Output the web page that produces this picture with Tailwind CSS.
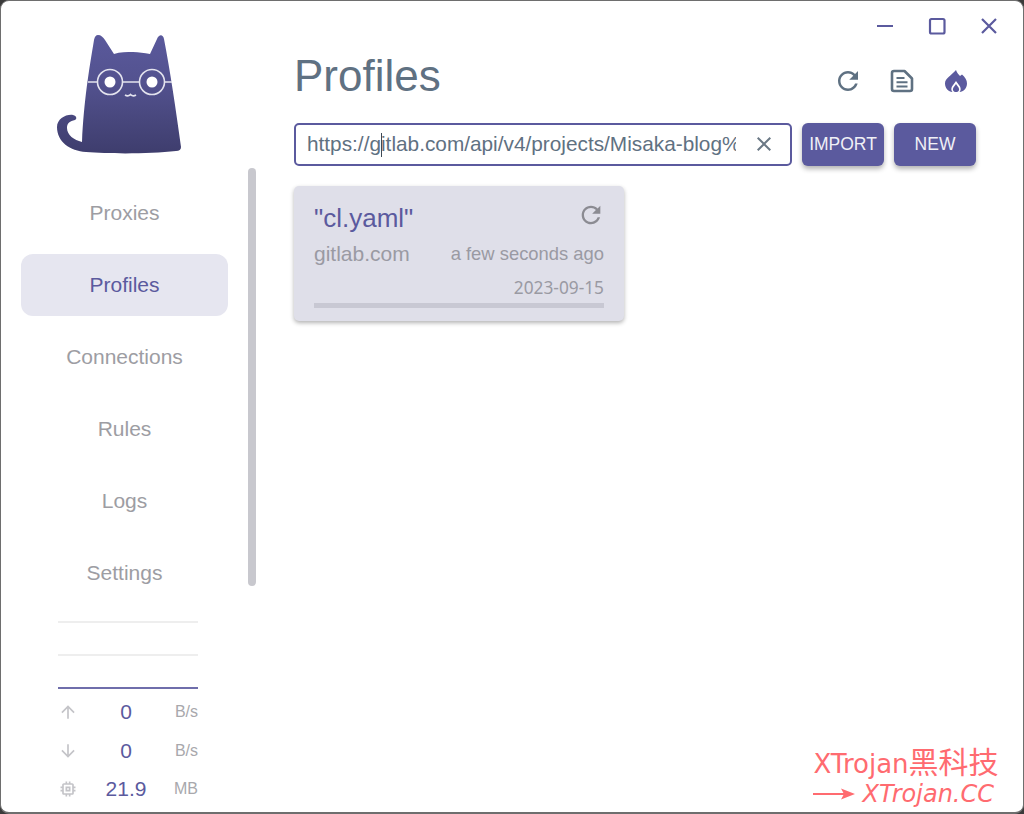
<!DOCTYPE html>
<html lang="en">
<head>
    <meta charset="UTF-8">
    <title>Profiles</title>
    <script src="https://cdn.jsdelivr.net/npm/@tailwindcss/browser@4"></script>
</head>
<body class="bg-[#3a3a3a] font-['Liberation_Sans',Arial,sans-serif]">
    <div class="relative flex w-[1024px] h-[814px] overflow-hidden bg-white rounded-[9px] border border-b-2 border-[#6e6e6e]">

        <!-- sidebar -->
        <aside class="w-[247px] shrink-0 flex flex-col">
            <svg class="shrink-0 ml-[49px] mt-[29px] w-[140px] h-[130px]" viewBox="50 30 140 130">
                <defs>
                    <linearGradient id="catFill" x1="0" y1="0" x2="0" y2="1">
                        <stop offset="0" stop-color="#5a599c"/>
                        <stop offset="0.4" stop-color="#53528f"/>
                        <stop offset="1" stop-color="#3e3d6d"/>
                    </linearGradient>
                </defs>
                <path fill="url(#catFill)" d="M98 35C101 35 103 37 105 40L114 54C120 52 127 52 133 52C139 52 144 53 150 54L157 39C159 34 163 34 164 39C170 70 176 110 181 147Q181 151 176 151C150 154 110 154 86 152C70 151 57 142 57 127C57 119 66 114 73 115C77 116 77 119 75 120C70 121 67 123 67 128C67 135 74 140 82 142C84 100 89 70 94 40Q95 35 98 35Z"/>
                <g fill="none" stroke="#e3e3ee" stroke-width="1.600">
                    <circle cx="110" cy="82" r="12.5"/>
                    <circle cx="152" cy="82" r="12.5"/>
                    <path d="M88 82H97.5M122.500 82H139.500M164.500 82H172"/>
                    <path d="M125 95Q128 97 130.500 94.500Q133 97 136 95" stroke-width="1.600"/>
                </g>
                <circle cx="110" cy="82" r="5.500" fill="#fff"/>
                <circle cx="152" cy="82" r="5.500" fill="#fff"/>
            </svg>

            <nav class="shrink-0 mt-[22px] ml-[20px] w-[207px] flex flex-col gap-[10px] text-[21px] text-center text-[#9d9da3]">
                <a class="h-[62px] flex items-center justify-center">Proxies</a>
                <a class="h-[62px] flex items-center justify-center rounded-[12px] bg-[#e6e6f0] text-[#5b5a9e]">Profiles</a>
                <a class="h-[62px] flex items-center justify-center">Connections</a>
                <a class="h-[62px] flex items-center justify-center">Rules</a>
                <a class="h-[62px] flex items-center justify-center">Logs</a>
                <a class="h-[62px] flex items-center justify-center">Settings</a>
            </nav>

            <!-- traffic graph -->
            <div class="shrink-0 mt-[17px] ml-[57px] w-[140px]">
                <div class="h-[33px] border-t-2 border-[#eeeeee]"></div>
                <div class="h-[33px] border-t-2 border-[#eeeeee]"></div>
                <div class="border-t-2 border-[#6f6eab]"></div>
            </div>

            <!-- stats -->
            <div class="shrink-0 ml-[57px] w-[140px] mt-[12px] flex flex-col gap-[16.5px]">
                <div class="h-[22px] flex items-center">
                    <svg class="w-[20px] h-[20px] fill-[#c4c4c8]" viewBox="0 0 24 24"><path d="M4 12l1.410 1.410L11 7.830V20h2V7.830l5.580 5.590L20 12l-8-8-8 8z"/></svg>
                    <span class="flex-1 pl-[2px] text-center text-[21px] text-[#5b5a9e]">0</span>
                    <span class="w-[26px] text-right text-[16px] text-[#a8a8ac]">B/s</span>
                </div>
                <div class="h-[22px] flex items-center">
                    <svg class="w-[20px] h-[20px] fill-[#c4c4c8]" viewBox="0 0 24 24"><path d="M20 12l-1.410-1.410L13 16.170V4h-2v12.170l-5.580-5.590L4 12l8 8 8-8z"/></svg>
                    <span class="flex-1 pl-[2px] text-center text-[21px] text-[#5b5a9e]">0</span>
                    <span class="w-[26px] text-right text-[16px] text-[#a8a8ac]">B/s</span>
                </div>
                <div class="h-[22px] flex items-center">
                    <svg class="w-[20px] h-[20px] fill-[#c4c4c8]" viewBox="0 0 24 24"><path d="M15 9H9v6h6V9zm-2 4h-2v-2h2v2zm8-2V9h-2V7c0-1.100-.9-2-2-2h-2V3h-2v2h-2V3H9v2H7c-1.100 0-2 .9-2 2v2H3v2h2v2H3v2h2v2c0 1.100.9 2 2 2h2v2h2v-2h2v2h2v-2h2c1.100 0 2-.9 2-2v-2h2v-2h-2v-2h2zm-4 6H7V7h10v10z"/></svg>
                    <span class="flex-1 pl-[2px] text-center text-[21px] text-[#5b5a9e]">21.9</span>
                    <span class="w-[26px] text-right text-[16px] text-[#a8a8ac]">MB</span>
                </div>
            </div>
        </aside>

        <!-- sidebar scrollbar -->
        <div class="absolute left-[247px] top-[167px] w-[8px] h-[418px] rounded-full bg-[#c8c8ce]"></div>

        <!-- main -->
        <main class="flex-1 pl-[46px] pr-[47px] relative">
            <!-- window buttons -->
            <div class="absolute top-[15px] right-[24px] flex items-center gap-[32px]">
                <svg class="w-[20px] h-[20px]" viewBox="0 0 20 20"><path d="M2 10H18" stroke="#5b5a9e" stroke-width="2" fill="none"/></svg>
                <svg class="w-[20px] h-[20px]" viewBox="0 0 20 20"><rect x="3" y="3" width="14.500" height="14.500" rx="1.500" stroke="#5b5a9e" stroke-width="2.200" fill="none"/></svg>
                <svg class="w-[20px] h-[20px]" viewBox="0 0 20 20"><path d="M3 3L17 17M17 3L3 17" stroke="#5b5a9e" stroke-width="2.200" fill="none"/></svg>
            </div>

            <!-- header -->
            <div class="pt-[50px] h-[122px] flex items-start justify-between">
                <h1 class="text-[44px] leading-[50px] text-[#5f7182]">Profiles</h1>
                <div class="flex items-center mt-[15px] mr-[8px]">
                    <svg class="w-[30px] h-[30px] fill-[#5f7182]" viewBox="0 0 24 24"><path d="M17.650 6.350C16.200 4.900 14.210 4 12 4c-4.420 0-7.990 3.580-7.990 8s3.570 8 7.990 8c3.730 0 6.840-2.550 7.730-6h-2.080c-.82 2.330-3.040 4-5.650 4-3.310 0-6-2.690-6-6s2.690-6 6-6c1.660 0 3.140.69 4.220 1.780L13 11h7V4l-2.350 2.350z"/></svg>
                    <svg class="ml-[27px] w-[24px] h-[24px]" viewBox="0 0 24 24">
                        <path d="M2 4a2 2 0 0 1 2-2H14.500L22 9.500V20a2 2 0 0 1-2 2H4a2 2 0 0 1-2-2z" fill="none" stroke="#5f7182" stroke-width="2.600" stroke-linejoin="round"/>
                        <path d="M6.500 9H14.500M6.500 13.200H17.500M6.500 17.400H17.500" fill="none" stroke="#5f7182" stroke-width="2"/>
                    </svg>
                    <svg class="ml-[30px] w-[24px] h-[24px] fill-[#5b5a9e]" viewBox="0 0 24 24">
                        <path d="M12 1C13 4 14.500 5.500 16 7L18 5.500C21 8 23 11 23 14.500C23 19 19.500 23 15.500 23C17 21.500 17 19.500 16 17.500L12 12L8 17.500C7 19.500 7 21.500 8.500 23C4.500 23 1 19 1 14.500C1 9 7 7 12 1Z"/>
                        <path d="M12 15L14.500 18.500C16 21 14.500 23 12 23C9.500 23 8 21 9.500 18.500Z"/>
                    </svg>
                </div>
            </div>

            <!-- url + actions -->
            <div class="flex items-center gap-[10px]">
                <div class="relative w-[498px] h-[43px] rounded-[5px] border-2 border-[#5b5a9e] flex items-center pl-[11px] pr-[14px]">
                    <span class="w-[429px] -mt-[2px] overflow-hidden whitespace-nowrap text-[20.800px] text-[#5f7182]">https://gitlab.com/api/v4/projects/Misaka-blog%</span>
                    <span class="absolute left-[85px] top-[8px] w-px h-[24px] bg-[#3d4a57]"></span>
                    <svg class="ml-auto -mt-[2px] w-[24px] h-[24px] fill-[#6a7885]" viewBox="0 0 24 24"><path d="M19 6.410 17.590 5 12 10.590 6.410 5 5 6.410 10.590 12 5 17.590 6.410 19 12 13.410 17.590 19 19 17.590 13.410 12z"/></svg>
                </div>
                <button class="w-[82px] h-[43px] rounded-[6px] bg-[#5b5a9e] text-[#f0f0f6] text-[17.500px] shadow-[0_3px_5px_rgba(0,0,0,0.3)]">IMPORT</button>
                <button class="w-[82px] h-[43px] rounded-[6px] bg-[#5b5a9e] text-[#f0f0f6] text-[17.500px] shadow-[0_3px_5px_rgba(0,0,0,0.3)]">NEW</button>
            </div>

            <!-- profile card -->
            <div class="mt-[20px] w-[330px] h-[135px] rounded-[5px] bg-[#dfdfe9] shadow-[0_2px_4px_rgba(0,0,0,0.3)] px-[20px] pt-[16px]">
                <div class="flex items-center justify-between h-[32px]">
                    <span class="text-[26px] text-[#5b5a9e]">"cl.yaml"</span>
                    <svg class="w-[28px] h-[28px] fill-[#8b8b92] -mr-[1px] -mt-[6px]" viewBox="0 0 24 24"><path d="M17.650 6.350C16.200 4.900 14.210 4 12 4c-4.420 0-7.990 3.580-7.990 8s3.570 8 7.990 8c3.730 0 6.840-2.550 7.730-6h-2.080c-.82 2.330-3.040 4-5.650 4-3.310 0-6-2.690-6-6s2.690-6 6-6c1.660 0 3.140.69 4.220 1.780L13 11h7V4l-2.350 2.350z"/></svg>
                </div>
                <div class="mt-[8px] flex items-center justify-between h-[24px] text-[#9a9aa3]">
                    <span class="text-[21px]">gitlab.com</span>
                    <span class="text-[18.400px]">a few seconds ago</span>
                </div>
                <div class="mt-[10px] h-[24px] text-right text-[17.300px] leading-[24px] text-[#9a9aa3] font-['Noto_Sans',sans-serif]">2023-09-15</div>
                <div class="mt-[3px] h-[5px] bg-[#c8c8d3]"></div>
            </div>
        </main>

        <!-- watermark -->
        <div class="absolute right-[24px] bottom-[4px] text-[#ff6b70] font-['DejaVu_Sans','Noto_Sans_CJK_SC',sans-serif]">
            <div class="text-[26px] leading-[32px] whitespace-nowrap">XTrojan<span class="text-[30px] font-['Noto_Sans_CJK_SC',sans-serif]">黑科技</span></div>
            <div class="flex items-center gap-[7px] leading-[28px] text-[24px] italic whitespace-nowrap">
                <svg class="w-[42px] h-[14px]" viewBox="0 0 42 14"><path d="M0 7H32" stroke="#ff6b70" stroke-width="2" fill="none"/><path d="M28 1.500L42 7L28 12.500L31 7Z" fill="#ff6b70"/></svg>
                <span class="pr-[5px]">XTrojan.CC</span>
            </div>
        </div>
    </div>
</body>
</html>
